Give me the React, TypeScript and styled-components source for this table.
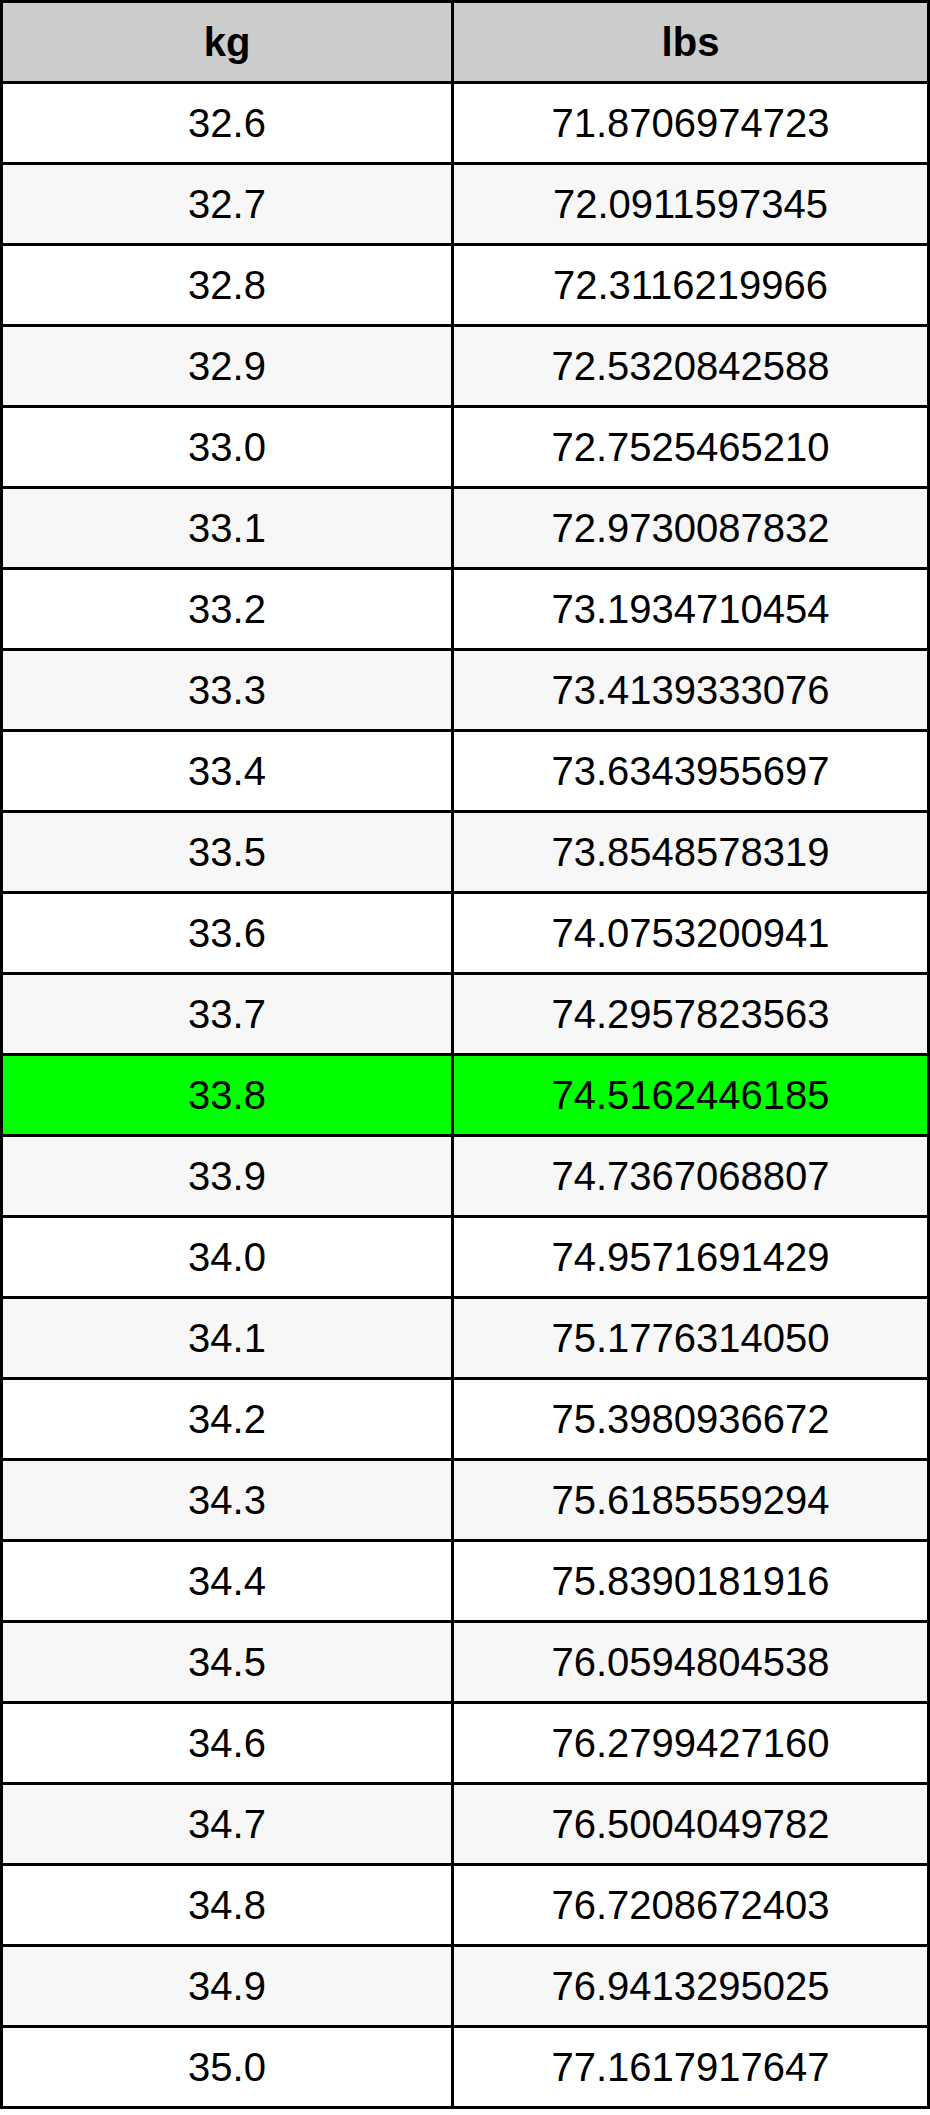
import React from 'react';
import styled, { createGlobalStyle } from 'styled-components';

const GlobalStyle = createGlobalStyle`
body {
    margin: 0;
    background: #ffffff;
    font-family: "Liberation Sans", Arial, sans-serif;
}
`;

const StyledTable = styled.div`
    display: grid;
    grid-template-columns: 448px 1fr;
    grid-auto-rows: 78px;
    gap: 3px;
    padding: 3px;
    width: 930px;
    box-sizing: border-box;
    background: #000000;
`;

type CellProps = {
    $header?: boolean;
    $shade?: boolean;
    $active?: boolean;
};

const Cell = styled.div<CellProps>`
    display: flex;
    justify-content: center;
    align-items: center;
    font-size: 40px;
    color: #000000;
    font-weight: ${p => (p.$header ? 700 : 400)};
    background: ${p =>
        p.$header ? '#cccccc' : p.$active ? '#00ff00' : p.$shade ? '#f7f7f7' : '#ffffff'};
`;

type Row = {
    kg: string;
    lbs: string;
};

const rows: Row[] = [
    { kg: '32.6', lbs: '71.8706974723' },
    { kg: '32.7', lbs: '72.0911597345' },
    { kg: '32.8', lbs: '72.3116219966' },
    { kg: '32.9', lbs: '72.5320842588' },
    { kg: '33.0', lbs: '72.7525465210' },
    { kg: '33.1', lbs: '72.9730087832' },
    { kg: '33.2', lbs: '73.1934710454' },
    { kg: '33.3', lbs: '73.4139333076' },
    { kg: '33.4', lbs: '73.6343955697' },
    { kg: '33.5', lbs: '73.8548578319' },
    { kg: '33.6', lbs: '74.0753200941' },
    { kg: '33.7', lbs: '74.2957823563' },
    { kg: '33.8', lbs: '74.5162446185' },
    { kg: '33.9', lbs: '74.7367068807' },
    { kg: '34.0', lbs: '74.9571691429' },
    { kg: '34.1', lbs: '75.1776314050' },
    { kg: '34.2', lbs: '75.3980936672' },
    { kg: '34.3', lbs: '75.6185559294' },
    { kg: '34.4', lbs: '75.8390181916' },
    { kg: '34.5', lbs: '76.0594804538' },
    { kg: '34.6', lbs: '76.2799427160' },
    { kg: '34.7', lbs: '76.5004049782' },
    { kg: '34.8', lbs: '76.7208672403' },
    { kg: '34.9', lbs: '76.9413295025' },
    { kg: '35.0', lbs: '77.1617917647' },
];

const selected = '33.8';

const App: React.FC = () => {
    return (
        <>
            <GlobalStyle />
            <StyledTable>
                <Cell $header>kg</Cell>
                <Cell $header>lbs</Cell>
                {rows.map((row, i) => (
                    <React.Fragment key={row.kg}>
                        <Cell $shade={i % 2 === 1} $active={row.kg === selected}>
                            {row.kg}
                        </Cell>
                        <Cell $shade={i % 2 === 1} $active={row.kg === selected}>
                            {row.lbs}
                        </Cell>
                    </React.Fragment>
                ))}
            </StyledTable>
        </>
    );
};

export default App;
